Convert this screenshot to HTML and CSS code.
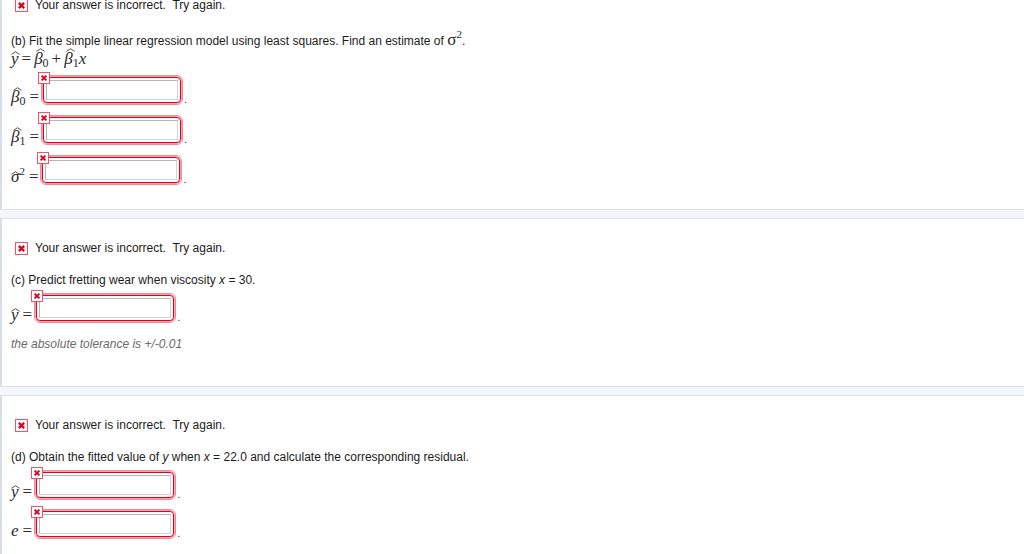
FILE: index.html
```html
<!DOCTYPE html>
<html>
<head>
<meta charset="utf-8">
<link rel="stylesheet" href="styles.css">
</head>
<body>
<div class="page">
  <section class="panel panel-first">
    <div class="feedback feedback-first">
      <span class="fb-icon"><svg viewBox="0 0 10 10"><path d="M2.6 2.6 L7.4 7.4 M7.4 2.6 L2.6 7.4"/></svg></span>
      <span>Your answer is incorrect.&nbsp; Try again.</span>
    </div>
    <p class="question question-first">(b) Fit the simple linear regression model using least squares. Find an estimate of <span class="math inline-math">σ<sup>2</sup></span>.</p>
    <div class="math math-line">
      <span class="hat">y<svg class="hat-mark" viewBox="0 0 10 4"><polyline points="0.5,3.5 5,0.6 9.5,3.5"/></svg></span><span class="op">=</span><span class="hat hat-beta">β<svg class="hat-mark" viewBox="0 0 10 4"><polyline points="0.5,3.5 5,0.6 9.5,3.5"/></svg></span><sub>0</sub><span class="op">+</span><span class="hat hat-beta">β<svg class="hat-mark" viewBox="0 0 10 4"><polyline points="0.5,3.5 5,0.6 9.5,3.5"/></svg></span><sub>1</sub><i>x</i>
    </div>
    <div class="answer-row">
      <span class="label math"><span class="hat hat-beta">β<svg class="hat-mark" viewBox="0 0 10 4"><polyline points="0.5,3.5 5,0.6 9.5,3.5"/></svg></span><sub>0</sub><span class="op">=</span></span>
      <span class="box"><span class="mark"><svg viewBox="0 0 10 10"><path d="M2.6 2.6 L7.4 7.4 M7.4 2.6 L2.6 7.4"/></svg></span><span class="box-inner"><span class="field"></span></span></span>
      <span class="dot">.</span>
    </div>
    <div class="answer-row">
      <span class="label math"><span class="hat hat-beta">β<svg class="hat-mark" viewBox="0 0 10 4"><polyline points="0.5,3.5 5,0.6 9.5,3.5"/></svg></span><sub>1</sub><span class="op">=</span></span>
      <span class="box"><span class="mark"><svg viewBox="0 0 10 10"><path d="M2.6 2.6 L7.4 7.4 M7.4 2.6 L2.6 7.4"/></svg></span><span class="box-inner"><span class="field"></span></span></span>
      <span class="dot">.</span>
    </div>
    <div class="answer-row">
      <span class="label math"><span class="hat hat-sigma">σ<svg class="hat-mark" viewBox="0 0 10 4"><polyline points="0.5,3.5 5,0.6 9.5,3.5"/></svg></span><sup>2</sup><span class="op">=</span></span>
      <span class="box"><span class="mark"><svg viewBox="0 0 10 10"><path d="M2.6 2.6 L7.4 7.4 M7.4 2.6 L2.6 7.4"/></svg></span><span class="box-inner"><span class="field"></span></span></span>
      <span class="dot">.</span>
    </div>
  </section>
  <div class="gap"></div>
  <section class="panel panel-c">
    <div class="feedback">
      <span class="fb-icon"><svg viewBox="0 0 10 10"><path d="M2.6 2.6 L7.4 7.4 M7.4 2.6 L2.6 7.4"/></svg></span>
      <span>Your answer is incorrect.&nbsp; Try again.</span>
    </div>
    <p class="question">(c) Predict fretting wear when viscosity <i>x</i> = 30.</p>
    <div class="answer-row">
      <span class="label math"><span class="hat">y<svg class="hat-mark" viewBox="0 0 10 4"><polyline points="0.5,3.5 5,0.6 9.5,3.5"/></svg></span><span class="op">=</span></span>
      <span class="box"><span class="mark"><svg viewBox="0 0 10 10"><path d="M2.6 2.6 L7.4 7.4 M7.4 2.6 L2.6 7.4"/></svg></span><span class="box-inner"><span class="field"></span></span></span>
      <span class="dot">.</span>
    </div>
    <p class="tolerance">the absolute tolerance is +/-0.01</p>
  </section>
  <div class="gap"></div>
  <section class="panel panel-d">
    <div class="feedback">
      <span class="fb-icon"><svg viewBox="0 0 10 10"><path d="M2.6 2.6 L7.4 7.4 M7.4 2.6 L2.6 7.4"/></svg></span>
      <span>Your answer is incorrect.&nbsp; Try again.</span>
    </div>
    <p class="question">(d) Obtain the fitted value of <i>y</i> when <i>x</i> = 22.0 and calculate the corresponding residual.</p>
    <div class="answer-row">
      <span class="label math"><span class="hat">y<svg class="hat-mark" viewBox="0 0 10 4"><polyline points="0.5,3.5 5,0.6 9.5,3.5"/></svg></span><span class="op">=</span></span>
      <span class="box"><span class="mark"><svg viewBox="0 0 10 10"><path d="M2.6 2.6 L7.4 7.4 M7.4 2.6 L2.6 7.4"/></svg></span><span class="box-inner"><span class="field"></span></span></span>
      <span class="dot">.</span>
    </div>
    <div class="answer-row row-tight">
      <span class="label math"><i>e</i><span class="op">=</span></span>
      <span class="box"><span class="mark"><svg viewBox="0 0 10 10"><path d="M2.6 2.6 L7.4 7.4 M7.4 2.6 L2.6 7.4"/></svg></span><span class="box-inner"><span class="field"></span></span></span>
      <span class="dot">.</span>
    </div>
  </section>
</div>
</body>
</html>
```
FILE: styles.css
```css
html, body {
  margin: 0;
  padding: 0;
  background: #ffffff;
}
body {
  font-family: "Liberation Sans", Arial, sans-serif;
  font-size: 12px;
  color: #1c1c1c;
  height: 554px;
  overflow: hidden;
}
.page {
  width: 1024px;
}
.panel {
  border-left: 2px solid #d6dfe9;
  padding: 21px 0 0 9px;
  background: #fff;
}
.panel-first {
  padding-top: 0;
  padding-bottom: 24px;
}
.panel-c {
  padding-bottom: 35px;
}
.panel-d {
  padding-bottom: 40px;
}
.gap {
  height: 8px;
  background: #f3f6fa;
  border-top: 1px solid #d9e1ea;
  border-bottom: 1px solid #d9e1ea;
}
.feedback {
  display: flex;
  align-items: center;
  height: 16px;
  padding-left: 4px;
  gap: 7px;
  font-size: 12px;
  line-height: 16px;
}
.feedback-first {
  margin-top: -3px;
}
.fb-icon {
  width: 13px;
  height: 13px;
  box-sizing: border-box;
  border: 1px solid #ec5469;
  background: #fff;
  display: flex;
  align-items: center;
  justify-content: center;
  flex: none;
}
.fb-icon svg {
  width: 11px;
  height: 11px;
}
.fb-icon path {
  stroke: #e0001b;
  stroke-width: 2.1;
  fill: none;
}
.question {
  margin: 17px 0 0 0;
  line-height: 14px;
  font-size: 12px;
}
.question-first {
  margin-top: 20px;
}
.question i {
  font-style: italic;
}
.inline-math {
  font-size: 14px;
}
.inline-math sup {
  font-size: 9px;
  vertical-align: 6px;
  line-height: 0;
}
.math {
  font-family: "Liberation Serif", "Times New Roman", serif;
  font-size: 17px;
  color: #2a2a2a;
}
.math-line {
  line-height: 20px;
  height: 20px;
  margin-top: 1px;
}
.math-line .op {
  padding: 0 3px;
}
.math sub {
  font-size: 12px;
  vertical-align: -3px;
  line-height: 0;
}
.math sup {
  font-size: 11px;
  vertical-align: 7px;
  line-height: 0;
}
.math i {
  font-style: italic;
}
.op {
  padding: 0 4px 0 4px;
}
.hat {
  position: relative;
  display: inline-block;
  font-style: italic;
}
.hat-mark {
  position: absolute;
  left: 0;
  top: 2px;
  width: 9px;
  height: 4px;
  overflow: visible;
}
.hat-beta .hat-mark {
  left: 2px;
  top: -1px;
}
.hat-sigma .hat-mark {
  left: 0;
  top: 3px;
}
.hat-mark polyline {
  fill: none;
  stroke: #2a2a2a;
  stroke-width: 0.9;
}
.answer-row {
  display: flex;
  align-items: flex-end;
  margin-top: 10px;
}
.math-line + .answer-row {
  margin-top: 6px;
}
.question + .answer-row {
  margin-top: 6px;
}
.row-tight {
  margin-top: 9px;
}
.label {
  line-height: 18px;
  margin-bottom: -1px;
  white-space: nowrap;
  padding-right: 1px;
}
.label .op {
  padding-right: 1px;
}
.box {
  position: relative;
  display: block;
  width: 142px;
  height: 30px;
  box-sizing: border-box;
  border: 1px solid #f28a99;
  border-radius: 6px;
  padding: 1px;
  background: #fff;
  flex: none;
}
.box-inner {
  display: block;
  height: 100%;
  box-sizing: border-box;
  border: 1px solid #e3001b;
  box-shadow: 0 0 0 0.5px #ef4a60;
  border-radius: 4px;
  padding: 2px;
}
.field {
  display: block;
  height: 100%;
  box-sizing: border-box;
  border: 1px solid #d4d4d4;
  border-top-color: #b5b5b5;
  border-left-color: #b5b5b5;
  background: #fff;
}
.mark {
  position: absolute;
  left: -4px;
  top: -4px;
  width: 12px;
  height: 12px;
  box-sizing: border-box;
  border: 1px solid #ec5469;
  background: #fff;
  display: flex;
  align-items: center;
  justify-content: center;
}
.mark svg {
  width: 10px;
  height: 10px;
}
.mark path {
  stroke: #e0001b;
  stroke-width: 2;
  fill: none;
}
.dot {
  font-size: 11px;
  line-height: 11px;
  margin-left: 1px;
  color: #333;
}
.tolerance {
  margin: 14px 0 0 0;
  font-style: italic;
  color: #6b6b6b;
  font-size: 12px;
  line-height: 14px;
}
```
